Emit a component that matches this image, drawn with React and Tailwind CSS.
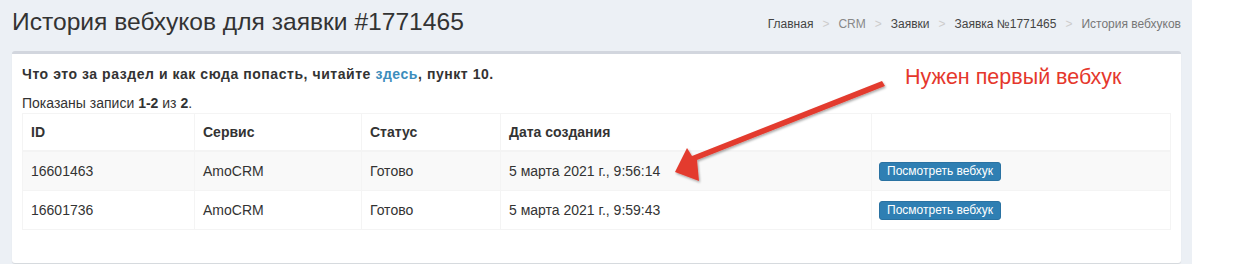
import React from 'react';

const rows = [
  { id: '16601463', service: 'AmoCRM', status: 'Готово', date: '5 марта 2021 г., 9:56:14' },
  { id: '16601736', service: 'AmoCRM', status: 'Готово', date: '5 марта 2021 г., 9:59:43' },
];

const crumbs = [
  { label: 'Главная', cls: 'text-[#444]' },
  { label: 'CRM', cls: 'text-[#888]' },
  { label: 'Заявки', cls: 'text-[#444]' },
  { label: 'Заявка №1771465', cls: 'text-[#444]' },
  { label: 'История вебхуков', cls: 'text-[#777]' },
];

const Arrow = () => (
  <svg
    className="absolute left-0 top-0 pointer-events-none"
    width="1247"
    height="264"
    viewBox="0 0 1247 264"
  >
    <defs>
      <filter id="sh" x="-20%" y="-20%" width="140%" height="140%">
        <feDropShadow dx="1" dy="1.5" stdDeviation="1.2" floodColor="#000" floodOpacity="0.35" />
      </filter>
    </defs>
    <polygon
      filter="url(#sh)"
      fill="#e33b2f"
      points="882,81 885,86 697,160 699,181 675,172 687,148 692,156"
    />
  </svg>
);

export default function App() {
  return (
    <div className="relative flex w-[1247px] h-[264px] bg-white font-['Liberation_Sans',Arial,sans-serif] text-[#333]">
      <div className="w-[1192px] h-full bg-[#ecf0f5]">
        <div className="flex items-start justify-between pl-[12px] pr-[11px] pt-[9px]">
          <h1 className="text-[24.6px] leading-[26px] text-[#333]">История вебхуков для заявки #1771465</h1>
          <div className="flex items-center pt-[7px] text-[12px] leading-[16px]">
            {crumbs.map((c, i) => (
              <span key={c.label} className="flex items-center">
                {i > 0 && <span className="px-[9px] text-[#ccc]">&gt;</span>}
                <span className={c.cls}>{c.label}</span>
              </span>
            ))}
          </div>
        </div>

        <div className="mt-[16px] ml-[12px] w-[1169px] bg-white border-t-[3px] border-[#d2d6de] rounded-[3px] shadow-[0_1px_1px_rgba(0,0,0,0.1)] px-[10px] pt-[10px] pb-[33px]">
          <p className="text-[14px] leading-[20px] font-bold tracking-[0.55px] text-[#333]">
            Что это за раздел и как сюда попасть, читайте{' '}
            <a className="text-[#3c8dbc]">здесь</a>, пункт 10.
          </p>
          <div className="mt-[9px] text-[14px] leading-[20px]">
            Показаны записи <b>1-2</b> из <b>2</b>.
          </div>
          <table className="w-[1148px] table-fixed border-collapse border border-[#f4f4f4] text-[14px] leading-[20px]">
            <colgroup>
              <col className="w-[172px]" />
              <col className="w-[167px]" />
              <col className="w-[139px]" />
              <col className="w-[371px]" />
              <col className="w-[299px]" />
            </colgroup>
            <thead>
              <tr>
                {['ID', 'Сервис', 'Статус', 'Дата создания', ''].map((h, i) => (
                  <th key={i} className="border border-[#f4f4f4] border-b-2 px-[8px] py-[8px] text-left font-bold">
                    {h}
                  </th>
                ))}
              </tr>
            </thead>
            <tbody>
              {rows.map((r, i) => (
                <tr key={r.id} className={i === 0 ? 'bg-[#f9f9f9]' : 'bg-white'}>
                  <td className="border border-[#f4f4f4] px-[8px] py-[9px]">{r.id}</td>
                  <td className="border border-[#f4f4f4] px-[8px] py-[9px]">{r.service}</td>
                  <td className="border border-[#f4f4f4] px-[8px] py-[9px]">{r.status}</td>
                  <td className="border border-[#f4f4f4] px-[8px] py-[9px]">{r.date}</td>
                  <td className="border border-[#f4f4f4] px-[7px] py-[9px]">
                    <button className="block bg-[#2f7fb3] border border-[#2a72a2] rounded-[3px] text-white text-[12px] leading-[17px] px-[7px]">
                      Посмотреть вебхук
                    </button>
                  </td>
                </tr>
              ))}
            </tbody>
          </table>
        </div>
      </div>
      <div className="absolute left-[905px] top-[64px] text-[21.5px] leading-[26px] text-[#e5372c]">
        Нужен первый вебхук
      </div>
      <Arrow />
    </div>
  );
}
